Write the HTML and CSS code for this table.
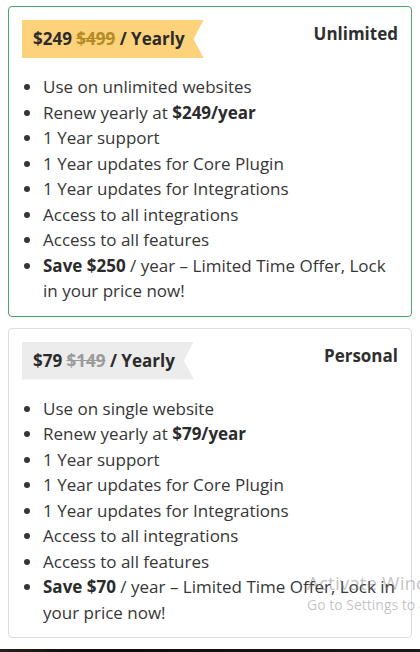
FILE: index.html
```html
<!DOCTYPE html>
<html lang="en">
<head>
<meta charset="utf-8">
<title>Pricing</title>
<link rel="stylesheet" href="styles.css">
</head>
<body>
<main class="plans">
  <section class="card card-featured">
    <header class="card-head">
      <div class="ribbon ribbon-gold">
        <span class="price">$249</span>
        <s class="old">$499</s>
        <span class="period">/ Yearly</span>
      </div>
      <h2 class="plan-name">Unlimited</h2>
    </header>
    <ul class="features">
      <li>Use on unlimited websites</li>
      <li>Renew yearly at <b>$249/year</b></li>
      <li>1 Year support</li>
      <li>1 Year updates for Core Plugin</li>
      <li>1 Year updates for Integrations</li>
      <li>Access to all integrations</li>
      <li>Access to all features</li>
      <li><b>Save $250</b> / year – Limited Time Offer, Lock in your price now!</li>
    </ul>
  </section>

  <section class="card">
    <header class="card-head">
      <div class="ribbon ribbon-gray">
        <span class="price">$79</span>
        <s class="old">$149</s>
        <span class="period">/ Yearly</span>
      </div>
      <h2 class="plan-name">Personal</h2>
    </header>
    <ul class="features">
      <li>Use on single website</li>
      <li>Renew yearly at <b>$79/year</b></li>
      <li>1 Year support</li>
      <li>1 Year updates for Core Plugin</li>
      <li>1 Year updates for Integrations</li>
      <li>Access to all integrations</li>
      <li>Access to all features</li>
      <li><b>Save $70</b> / year – Limited Time Offer, Lock in your price now!</li>
    </ul>
  </section>
</main>
<div class="taskbar"></div>
<div class="watermark">
  <div class="wm-title">Activate Windows</div>
  <div class="wm-sub">Go to Settings to activate Windows.</div>
</div>
</body>
</html>
```
FILE: styles.css
```css
* { box-sizing: border-box; }

html, body {
  margin: 0;
  padding: 0;
  background: #ffffff;
  overflow: hidden;
}

body {
  width: 420px;
  height: 652px;
  position: relative;
  font-family: "Open Sans", "Noto Sans", sans-serif;
  color: #333333;
}

.plans {
  display: flex;
  flex-direction: column;
  gap: 11px;
  padding: 6px 8px 0 8px;
}

.card {
  border: 1px solid #dddddd;
  border-radius: 4px;
  padding: 13px 12px 12px 13px;
  background: #fff;
}

.card-featured {
  border-color: #48a866;
}

.card-head {
  display: flex;
  justify-content: space-between;
  align-items: flex-start;
}

.ribbon {
  height: 38px;
  line-height: 38px;
  padding: 0 19px 0 11px;
  font-size: 17px;
  font-weight: 700;
  color: #2b2b2b;
  white-space: nowrap;
  clip-path: polygon(0 0, 100% 0, calc(100% - 10px) 50%, 100% 100%, 0 100%);
}

.ribbon-gold { background: #fdd27a; }
.ribbon-gray { background: #ececec; }

.ribbon-gold .old { color: #b48a26; }
.ribbon-gray .old { color: #9a9a9a; }

.plan-name {
  margin: 1px 1px 0 0;
  font-size: 17px;
  line-height: 26px;
  font-weight: 700;
  color: #2f2f2f;
}

.features {
  margin: 16px 0 0 0;
  padding: 0 0 0 21px;
  font-size: 17px;
  line-height: 25.5px;
  color: #363636;
}

.features b {
  font-weight: 700;
  color: #2b2b2b;
}

.taskbar {
  position: absolute;
  left: 0;
  right: 0;
  bottom: 0;
  height: 3px;
  background: linear-gradient(90deg, #2a2118, #0e0c0a 20%, #131313 60%, #1a1a1a);
}

.watermark {
  position: absolute;
  left: 307px;
  right: 0;
  top: 570px;
  overflow: hidden;
  white-space: nowrap;
  color: rgba(120, 120, 120, 0.45);
  font-family: "Open Sans", "Noto Sans", sans-serif;
  pointer-events: none;
}

.wm-title {
  font-size: 19px;
  line-height: 26px;
}

.wm-sub {
  font-size: 14px;
  line-height: 18px;
}
```
